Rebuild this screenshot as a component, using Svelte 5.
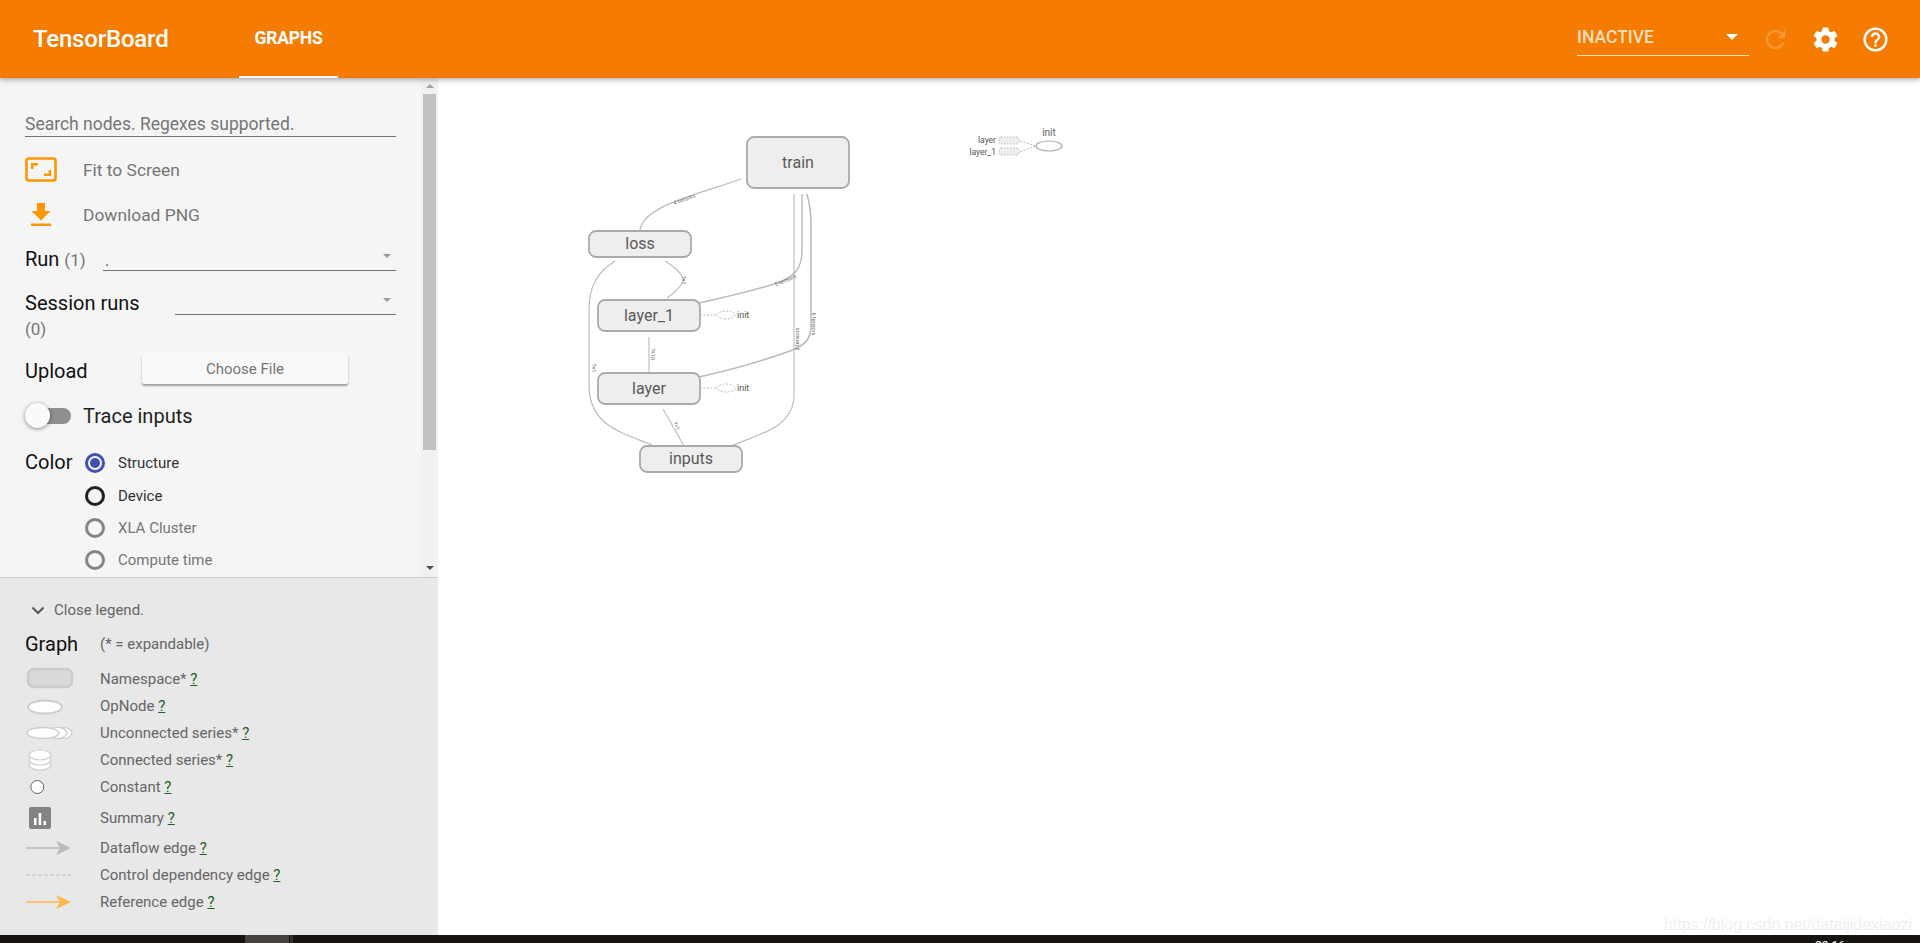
<script>
    const colors = [
        { label: 'Structure', state: 'on' },
        { label: 'Device', state: 'dark' },
        { label: 'XLA Cluster', state: 'off' },
        { label: 'Compute time', state: 'off' },
    ];
    const legend = [
        { key: 'ns', label: 'Namespace*', h: 27 },
        { key: 'op', label: 'OpNode', h: 27 },
        { key: 'un', label: 'Unconnected series*', h: 27 },
        { key: 'co', label: 'Connected series*', h: 27 },
        { key: 'ct', label: 'Constant', h: 27 },
        { key: 'su', label: 'Summary', h: 35 },
        { key: 'df', label: 'Dataflow edge', h: 26 },
        { key: 'cd', label: 'Control dependency edge', h: 27 },
        { key: 're', label: 'Reference edge', h: 27 },
    ];
    const nodes = [
        { name: 'train', x: 747, y: 137, w: 102, h: 51 },
        { name: 'loss', x: 589, y: 231, w: 102, h: 26 },
        { name: 'layer_1', x: 598, y: 300, w: 102, h: 31 },
        { name: 'layer', x: 598, y: 373, w: 102, h: 31 },
        { name: 'inputs', x: 640, y: 446, w: 102, h: 26 },
    ];
    const edges = [
        { d: 'M741 179C700 194 644 205 640 230', w: 1.2 },
        { d: 'M615 261C598 272 589 285 589 310V385C589 425 620 432 652 445', w: 1.2 },
        { d: 'M665 261C676 268 683 275 683 280C683 285 675 292 667 298', w: 1.1 },
        { d: 'M802 194V250C802 268 795 276 780 282C755 291 725 297 699 303', w: 1.4 },
        { d: 'M794 194V395C794 425 765 433 733 445', w: 1.1 },
        { d: 'M807 194C810 205 811 215 811 225V325C811 340 805 345 790 351C765 360 730 370 699 377', w: 1.6 },
        { d: 'M649 337V373', w: 1.1 },
        { d: 'M663 409L684 446', w: 1.1 },
    ];
    const labels = [
        { t: '4 tensors', x: 685, y: 201, r: -20 },
        { t: '5 tensors', x: 786, y: 282, r: -22 },
        { t: '2 tensors', x: 799, y: 339, r: -90 },
        { t: '6 tensors', x: 812, y: 324, r: 90 },
        { t: '?×1', x: 592, y: 368, r: 90 },
        { t: '?×1', x: 682, y: 280, r: 90 },
        { t: '?×10', x: 651, y: 354, r: 90 },
        { t: '?×1', x: 675, y: 427, r: 62 },
    ];
</script>

<div class="page">
    <header class="topbar">
        <div class="brand">TensorBoard</div>
        <div class="tab">GRAPHS</div>
        <div class="spacer"></div>
        <div class="run-select">
            <span>INACTIVE</span>
            <i class="caret white"></i>
        </div>
        <svg class="tb-icon reload" viewBox="0 0 24 24"><path d="M17.65 6.35A7.95 7.95 0 0 0 12 4a8 8 0 1 0 7.73 10h-2.08A6 6 0 1 1 12 6c1.66 0 3.14.69 4.22 1.78L13 11h7V4l-2.35 2.35z"/></svg>
        <svg class="tb-icon gear" viewBox="0 0 24 24"><path d="M19.43 12.98c.04-.32.07-.64.07-.98s-.03-.66-.07-.98l2.11-1.65a.5.5 0 0 0 .12-.64l-2-3.46a.5.5 0 0 0-.61-.22l-2.49 1a7.3 7.3 0 0 0-1.69-.98l-.38-2.65A.49.49 0 0 0 14 2h-4a.49.49 0 0 0-.49.42l-.38 2.65c-.61.25-1.17.59-1.69.98l-2.49-1a.49.49 0 0 0-.61.22l-2 3.46a.49.49 0 0 0 .12.64l2.11 1.65c-.04.32-.07.65-.07.98s.03.66.07.98l-2.11 1.65a.5.5 0 0 0-.12.64l2 3.46c.12.22.39.3.61.22l2.49-1c.52.4 1.08.73 1.69.98l.38 2.65c.03.24.24.42.49.42h4c.25 0 .46-.18.49-.42l.38-2.65c.61-.25 1.17-.59 1.69-.98l2.49 1c.23.09.49 0 .61-.22l2-3.46a.5.5 0 0 0-.12-.64l-2.11-1.65zM12 15.5a3.5 3.5 0 1 1 0-7 3.5 3.5 0 0 1 0 7z"/></svg>
        <svg class="tb-icon help" viewBox="0 0 24 24"><path d="M11 18h2v-2h-2v2zm1-16a10 10 0 1 0 0 20 10 10 0 0 0 0-20zm0 18a8 8 0 1 1 0-16 8 8 0 0 1 0 16zm0-14a4 4 0 0 0-4 4h2a2 2 0 1 1 4 0c0 2-3 1.75-3 5h2c0-2.25 3-2.5 3-5a4 4 0 0 0-4-4z"/></svg>
    </header>

    <div class="main">
        <aside class="sidebar">
            <div class="controls">
                <div class="controls-body">
                    <div class="search">Search nodes. Regexes supported.</div>

                    <div class="actions">
                        <div class="action">
                            <svg class="act-icon" viewBox="0 0 32 26"><rect x="1.500" y="1.500" width="29" height="22" rx="2" fill="none" stroke="#ff9800" stroke-width="2.600"/><path d="M6 6h7v2.400H8.400V12H6zM26 19h-7v-2.400h4.600V13H26z" fill="#ff9800"/></svg>
                            <span>Fit to Screen</span>
                        </div>
                        <div class="action">
                            <svg class="act-icon" viewBox="0 0 32 26"><path d="M12 1h8v8h5.500L16 18.500 6.500 9H12zM6 21.500h20V24H6z" fill="#ff9800"/></svg>
                            <span>Download PNG</span>
                        </div>
                    </div>

                    <div class="select-row run">
                        <div class="sel-label">Run <em>(1)</em></div>
                        <div class="sel-box"><span class="dot">.</span><i class="caret"></i></div>
                    </div>
                    <div class="select-row session">
                        <div class="sel-label">Session runs</div>
                        <div class="sel-box"><i class="caret"></i></div>
                    </div>
                    <div class="sess-count">(0)</div>

                    <div class="upload">
                        <div class="sel-label">Upload</div>
                        <div class="file-btn">Choose File</div>
                    </div>

                    <div class="trace">
                        <div class="toggle"><i class="track"></i><i class="knob"></i></div>
                        <span>Trace inputs</span>
                    </div>

                    <div class="color">
                        <div class="sel-label">Color</div>
                        <div class="radios">
                            {#each colors as c}
                                <div class="radio {c.state}">
                                    <i class="ring"></i>
                                    <span>{c.label}</span>
                                </div>
                            {/each}
                        </div>
                    </div>
                </div>
                <div class="scrollbar">
                    <i class="arrow up"></i>
                    <div class="rail"><div class="thumb"></div></div>
                    <i class="arrow down"></i>
                </div>
            </div>

            <div class="legend">
                <div class="close-row">
                    <svg viewBox="0 0 14 9"><path d="M1.500 1.500L7 7l5.500-5.500" fill="none" stroke="#555" stroke-width="2"/></svg>
                    <span>Close legend.</span>
                </div>
                <div class="graph-row">
                    <div class="sel-label">Graph</div>
                    <span>(* = expandable)</span>
                </div>
                <div class="legend-rows">
                    {#each legend as row}
                        <div class="legend-row" style="height: {row.h}px">
                            <svg class="glyph" viewBox="0 0 50 26">
                                {#if row.key === 'ns'}
                                    <rect x="3" y="3" width="44" height="18" rx="6" fill="#d9d9d9" stroke="#ccc" stroke-width="2.500"/>
                                {:else if row.key === 'op'}
                                    <ellipse cx="20" cy="14" rx="17" ry="6.500" fill="#fff" stroke="#ccc" stroke-width="1.800"/>
                                {:else if row.key === 'un'}
                                    <ellipse cx="38" cy="13" rx="9" ry="5.500" fill="#fff" stroke="#ccc" stroke-width="1.200"/>
                                    <ellipse cx="32" cy="13" rx="10" ry="5.500" fill="#fff" stroke="#ccc" stroke-width="1.200"/>
                                    <ellipse cx="18" cy="13" rx="16" ry="5.500" fill="#fff" stroke="#ccc" stroke-width="1.500"/>
                                {:else if row.key === 'co'}
                                    <ellipse cx="15" cy="18" rx="11" ry="5" fill="#fff" stroke="#ccc" stroke-width="1.200"/>
                                    <ellipse cx="15" cy="13" rx="11" ry="5" fill="#fff" stroke="#ccc" stroke-width="1.200"/>
                                    <ellipse cx="15" cy="8" rx="11" ry="5" fill="#fff" stroke="#ccc" stroke-width="1.200"/>
                                {:else if row.key === 'ct'}
                                    <circle cx="12.300" cy="13" r="6.500" fill="#fff" stroke="#666" stroke-width="1"/>
                                {:else if row.key === 'su'}
                                    <rect x="4" y="2" width="22" height="22" rx="2" fill="#848484"/>
                                    <path d="M9 13h2.500v7H9zM13.700 8h2.500v12h-2.500zM18.500 16H21v4h-2.500z" fill="#fff"/>
                                {:else if row.key === 'df'}
                                    <path d="M1 13H36" stroke="#bbb" stroke-width="1.500"/>
                                    <path d="M31 6l15 7-15 7 4-7z" fill="#bbb"/>
                                {:else if row.key === 'cd'}
                                    <path d="M1 13H46" stroke="#bbb" stroke-width="1" stroke-dasharray="4 2"/>
                                {:else}
                                    <path d="M1 13H36" stroke="#ffb74d" stroke-width="1.500"/>
                                    <path d="M31 6l15 7-15 7 4-7z" fill="#ffb74d"/>
                                {/if}
                            </svg>
                            <span>{row.label} <u>?</u></span>
                        </div>
                    {/each}
                </div>
            </div>
        </aside>

        <svg class="graph" viewBox="438 78 1482 857">
            {#each edges as e}
                <path d={e.d} fill="none" stroke="#bbb" stroke-width={e.w}/>
            {/each}
            {#each labels as l}
                <text class="edge-label" transform="translate({l.x} {l.y}) rotate({l.r})" text-anchor="middle">{l.t}</text>
            {/each}
            {#each nodes as n}
                <rect x={n.x} y={n.y} width={n.w} height={n.h} rx="7" fill="#eee" stroke="#aaa" stroke-width="1.800"/>
                <text class="node-name" x={n.x + n.w / 2} y={n.y + n.h / 2 + 5} text-anchor="middle">{n.name}</text>
            {/each}
            {#each [315, 388] as y}
                <path d="M700 {y}H717" stroke="#bbb" stroke-dasharray="2 1.500" fill="none"/>
                <ellipse cx="726" cy={y} rx="9" ry="4" fill="#fff" stroke="#bbb" stroke-dasharray="2 1.500"/>
                <text class="init" x="737" y={y + 3}>init</text>
            {/each}

            <text class="mini" x="996" y="143" text-anchor="end">layer</text>
            <text class="mini" x="996" y="155" text-anchor="end">layer_1</text>
            <rect x="999" y="137" width="20" height="7" rx="2" fill="#eee" stroke="#bbb" stroke-dasharray="1.500 1.500"/>
            <rect x="999" y="148" width="20" height="7" rx="2" fill="#eee" stroke="#bbb" stroke-dasharray="1.500 1.500"/>
            <path d="M1020 141L1036 146M1020 152L1036 146" stroke="#bbb" stroke-dasharray="2 1.500" fill="none"/>
            <ellipse cx="1049" cy="146" rx="13" ry="5" fill="#fff" stroke="#aaa" stroke-width="1.200"/>
            <text class="mini-init" x="1049" y="136" text-anchor="middle">init</text>
        </svg>
        <div class="watermark">https://blog.csdn.net/dataijidexiaozi</div>
    </div>

    <footer class="taskbar">
        <i class="task-active"></i>
        <i class="task-sep"></i>
        <span class="clock">22:16</span>
    </footer>
</div>

<style>
    :global(body) {
        margin: 0;
        font-family: Roboto, "Noto Sans", sans-serif;
        background: #fff;
    }

    .page {
        width: 1920px;
        height: 943px;
        display: flex;
        flex-direction: column;
        overflow: hidden;
    }

    .topbar {
        height: 78px;
        flex: none;
        background: #f57c00;
        color: #fff;
        display: flex;
        align-items: center;
        position: relative;
        z-index: 2;
        box-shadow: 0 2px 5px rgba(0, 0, 0, 0.3);
    }

    .brand {
        margin-left: 33px;
        width: 206px;
        font-size: 24px;
        font-weight: 500;
        letter-spacing: -0.2px;
    }

    .tab {
        width: 99px;
        height: 78px;
        box-sizing: border-box;
        display: flex;
        align-items: center;
        justify-content: center;
        font-size: 17.500px;
        font-weight: 700;
        letter-spacing: -0.2px;
        border-bottom: 2px solid #fff;
    }

    .spacer {
        flex: 1;
    }

    .run-select {
        width: 172px;
        height: 35px;
        box-sizing: border-box;
        margin-top: -1px;
        margin-right: 12px;
        border-bottom: 1px solid #ffe0c0;
        display: flex;
        align-items: center;
        justify-content: space-between;
        padding: 0 11px 2px 0;
        font-size: 17.500px;
        font-weight: 500;
        color: rgba(255, 255, 255, 0.75);
    }

    .caret {
        width: 0;
        height: 0;
        border-left: 4.500px solid transparent;
        border-right: 4.500px solid transparent;
        border-top: 4.500px solid #999;
        display: block;
    }

    .caret.white {
        border-left-width: 6px;
        border-right-width: 6px;
        border-top: 6px solid #fff;
    }

    .tb-icon {
        width: 29px;
        height: 29px;
        fill: #fff;
        flex: none;
    }

    .reload {
        opacity: 0.2;
        margin-right: 21px;
    }

    .gear {
        margin-right: 21px;
    }

    .help {
        margin-right: 30px;
    }

    .main {
        flex: 1;
        display: flex;
        position: relative;
        min-height: 0;
    }

    .sidebar {
        width: 438px;
        flex: none;
        display: flex;
        flex-direction: column;
    }

    .controls {
        height: 499px;
        flex: none;
        display: flex;
        background: #f5f5f5;
        border-bottom: 1px solid #ccc;
        overflow: hidden;
    }

    .controls-body {
        flex: 1;
        box-sizing: border-box;
        padding: 28px 25px 0;
        min-width: 0;
    }

    .scrollbar {
        width: 17px;
        flex: none;
        background: #f1f1f1;
        display: flex;
        flex-direction: column;
        align-items: center;
        padding-top: 6px;
        box-sizing: border-box;
    }

    .rail {
        flex: 1;
        width: 100%;
        padding-top: 6px;
        box-sizing: border-box;
    }

    .thumb {
        width: 13px;
        height: 356px;
        margin-left: 2px;
        background: #c1c1c1;
    }

    .arrow {
        width: 0;
        height: 0;
        border-left: 4px solid transparent;
        border-right: 4px solid transparent;
        display: block;
    }

    .arrow.up {
        border-bottom: 4px solid #a3a3a3;
    }

    .arrow.down {
        border-top: 4px solid #505050;
        margin-bottom: 7px;
    }

    .search {
        width: 371px;
        height: 31px;
        box-sizing: border-box;
        border-bottom: 1px solid #757575;
        font-size: 17.500px;
        line-height: 36px;
        color: #757575;
    }

    .actions {
        margin-top: 10px;
    }

    .action {
        display: flex;
        align-items: center;
        height: 45px;
        font-size: 17.400px;
        color: #757575;
    }

    .act-icon {
        width: 32px;
        height: 26px;
        margin-right: 26px;
        flex: none;
    }

    .select-row {
        display: flex;
        align-items: flex-end;
        justify-content: space-between;
        width: 371px;
        height: 44px;
    }

    .select-row.run {
        height: 34px;
    }

    .sel-label {
        font-size: 20px;
        color: #111;
    }

    .sel-label em {
        font-style: normal;
        font-size: 17px;
        color: #757575;
    }

    .sel-box {
        height: 30px;
        box-sizing: border-box;
        border-bottom: 1px solid #757575;
        display: flex;
        align-items: center;
        justify-content: flex-end;
        padding-right: 5px;
        position: relative;
    }

    .run .sel-box {
        width: 293px;
    }

    .session .sel-box {
        width: 221px;
    }

    .dot {
        position: absolute;
        left: 2px;
        bottom: 1px;
        font-size: 16px;
        line-height: 16px;
        color: #555;
    }

    .sess-count {
        font-size: 17px;
        color: #757575;
        height: 26px;
        line-height: 28px;
    }

    .upload {
        display: flex;
        align-items: center;
        height: 50px;
        margin-top: 5px;
    }

    .upload .sel-label {
        width: 117px;
    }

    .file-btn {
        width: 206px;
        height: 31px;
        background: #f9f9f9;
        border-radius: 2px;
        margin-top: -5px;
        box-shadow: 0 2px 2px rgba(0, 0, 0, 0.35);
        display: flex;
        align-items: center;
        justify-content: center;
        font-size: 15px;
        color: #757575;
    }

    .trace {
        display: flex;
        align-items: center;
        height: 40px;
        font-size: 20px;
        color: #222;
    }

    .toggle {
        width: 46px;
        height: 26px;
        position: relative;
        margin-right: 12px;
        flex: none;
    }

    .track {
        position: absolute;
        left: 6px;
        top: 5px;
        width: 40px;
        height: 16px;
        border-radius: 8px;
        background: #8f8f8f;
    }

    .knob {
        position: absolute;
        left: 0;
        top: 0;
        width: 25px;
        height: 25px;
        border-radius: 50%;
        background: #fafafa;
        box-shadow: 0 1px 4px rgba(0, 0, 0, 0.45);
    }

    .color {
        display: flex;
        margin-top: 11px;
    }

    .color .sel-label {
        width: 60px;
        line-height: 30px;
    }

    .radio {
        height: 32.400px;
        display: flex;
        align-items: center;
        font-size: 15px;
        color: #757575;
    }

    .radio.on,
    .radio.dark {
        color: #333;
    }

    .ring {
        width: 20px;
        height: 20px;
        box-sizing: border-box;
        border-radius: 50%;
        border: 3px solid #858585;
        margin-right: 13px;
        display: block;
        position: relative;
    }

    .radio.on .ring {
        border-color: #3f51b5;
    }

    .radio.on .ring::after {
        content: '';
        position: absolute;
        inset: 2px;
        border-radius: 50%;
        background: #3f51b5;
    }

    .radio.dark .ring {
        border-color: #212121;
    }

    .legend {
        flex: 1;
        background: #e8e8e8;
        box-sizing: border-box;
        padding: 20px 0 0 25px;
        font-size: 15px;
        color: #666;
    }

    .close-row {
        display: flex;
        align-items: center;
        height: 24px;
        margin-left: 6px;
    }

    .close-row svg {
        width: 14px;
        height: 9px;
        margin-right: 9px;
    }

    .graph-row {
        display: flex;
        align-items: center;
        height: 32px;
        margin-top: 6px;
    }

    .graph-row .sel-label {
        width: 75px;
    }

    .legend-rows {
        margin-top: 5px;
    }

    .legend-row {
        display: flex;
        align-items: center;
    }

    .glyph {
        width: 50px;
        height: 26px;
        margin-right: 25px;
        flex: none;
    }

    .legend-row u {
        color: #1b5e20;
    }

    .graph {
        flex: 1;
        height: 857px;
        display: block;
        min-width: 0;
    }

    .edge-label {
        font-size: 5.500px;
        fill: #666;
    }

    .node-name {
        font-size: 16px;
        fill: #5a5a5a;
    }

    .init {
        font-size: 9px;
        fill: #555;
    }

    .mini {
        font-size: 8.500px;
        fill: #555;
    }

    .mini-init {
        font-size: 10px;
        fill: #666;
    }

    .watermark {
        position: absolute;
        right: 8px;
        bottom: 1px;
        font-family: "Liberation Sans", sans-serif;
        font-size: 16px;
        color: #f0f0f0;
    }

    .taskbar {
        height: 8px;
        flex: none;
        background: #17130f;
        position: relative;
        overflow: hidden;
    }

    .task-active {
        position: absolute;
        left: 245px;
        top: 0;
        width: 44px;
        height: 8px;
        background: #45423f;
    }

    .task-sep {
        position: absolute;
        left: 290px;
        top: 0;
        width: 3px;
        height: 8px;
        background: #33302d;
    }

    .clock {
        position: absolute;
        left: 1815px;
        top: 4px;
        font-size: 12px;
        line-height: 14px;
        color: #fff;
    }
</style>
